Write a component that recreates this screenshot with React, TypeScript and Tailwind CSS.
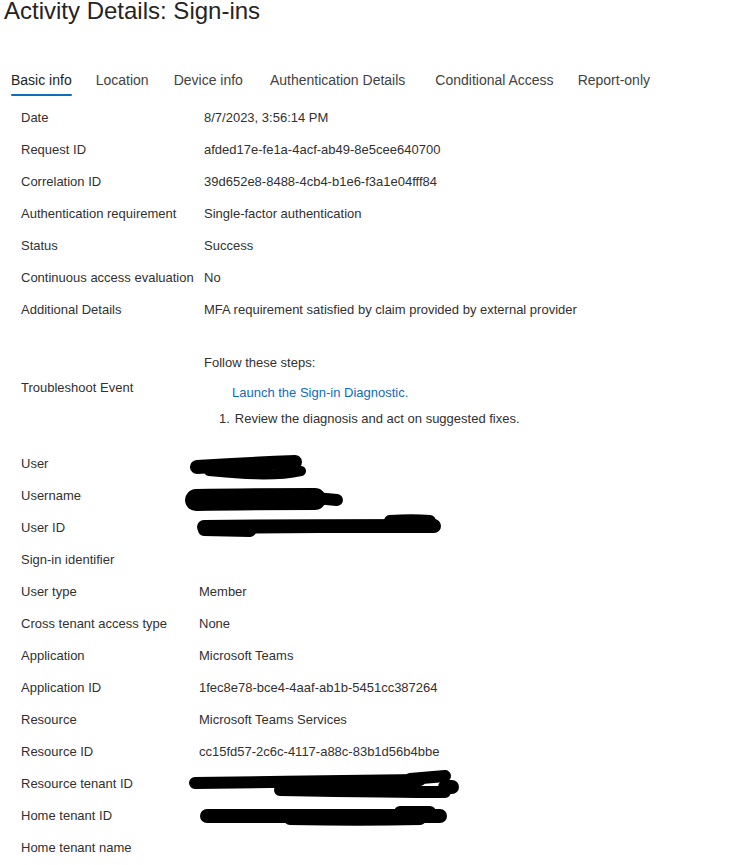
import React from 'react'

// tab labels with the spacing that the portal gives each one
const tabs: [string, string][] = [
  ['Basic info', ''],
  ['Location', 'ml-6'],
  ['Device info', 'ml-[25px]'],
  ['Authentication Details', 'ml-[27px]'],
  ['Conditional Access', 'ml-[30px]'],
  ['Report-only', 'ml-6'],
]

const topRows: [string, string][] = [
  ['Date', '8/7/2023, 3:56:14 PM'],
  ['Request ID', 'afded17e-fe1a-4acf-ab49-8e5cee640700'],
  ['Correlation ID', '39d652e8-8488-4cb4-b1e6-f3a1e04fff84'],
  ['Authentication requirement', 'Single-factor authentication'],
  ['Status', 'Success'],
  ['Continuous access evaluation', 'No'],
  ['Additional Details', 'MFA requirement satisfied by claim provided by external provider'],
]

// marker scribbles over the redacted values: [path, strokeWidth]
// svg sits 20px left/up of the value cell
const blots: Record<string, [string, number][]> = {
  user: [
    ['M18 33 C50 31 90 29 116 28', 14],
    ['M30 37 C60 40 95 43 122 37', 10],
  ],
  username: [
    ['M17 34 C60 33 100 33 136 33', 22],
    ['M136 32 L158 34', 12],
  ],
  userid: [
    ['M25 29 C100 28 180 28 255 28', 14],
    ['M25 32 L71 33', 12],
    ['M211 23 C225 22 240 22 251 23', 12],
  ],
  restenant: [
    ['M16 29 C90 28 170 27 241 26', 12],
    ['M101 36 C160 37 220 38 266 38', 12],
    ['M231 25 L266 22', 12],
    ['M266 33 L273 33', 14],
  ],
  hometenant: [
    ['M28 30 C100 30 180 30 261 30', 14],
    ['M111 33 C160 34 200 34 241 33', 12],
    ['M221 26 L251 26', 12],
  ],
}

function Redacted({ id }: { id: string }) {
  return (
    <svg className="absolute -left-5 -top-5" width="300" height="60" viewBox="0 0 300 60" fill="none">
      {blots[id].map(([d, w], i) => (
        <path key={i} d={d} stroke="#000" strokeWidth={w} strokeLinecap="round" strokeLinejoin="round" />
      ))}
    </svg>
  )
}

const bottomRows: [string, string | { redact: string } | null][] = [
  ['User', { redact: 'user' }],
  ['Username', { redact: 'username' }],
  ['User ID', { redact: 'userid' }],
  ['Sign-in identifier', null],
  ['User type', 'Member'],
  ['Cross tenant access type', 'None'],
  ['Application', 'Microsoft Teams'],
  ['Application ID', '1fec8e78-bce4-4aaf-ab1b-5451cc387264'],
  ['Resource', 'Microsoft Teams Services'],
  ['Resource ID', 'cc15fd57-2c6c-4117-a88c-83b1d56b4bbe'],
  ['Resource tenant ID', { redact: 'restenant' }],
  ['Home tenant ID', { redact: 'hometenant' }],
  ['Home tenant name', null],
]

export default function App() {
  return (
    <div className="min-h-screen bg-white text-[#323130] font-['Liberation_Sans',Arial,sans-serif] text-[13px] overflow-hidden">
      <h1 className="pl-1 -mt-[5px] text-[24px] leading-8 text-[#242424]">Activity Details: Sign-ins</h1>

      {/* Tabs */}
      <div className="mt-[43px] pl-[11px] flex text-[14px]">
        {tabs.map(([t, m], i) => (
          <div key={t} className={`flex flex-col ${m}`}>
            <span className={`leading-5 ${i === 0 ? 'text-[#242424]' : 'text-[#424242]'}`}>{t}</span>
            <span className={`mt-1 h-[2px] rounded-full ${i === 0 ? 'bg-[#0f6cbd]' : 'bg-transparent'}`} />
          </div>
        ))}
      </div>

      <div className="mt-[6px] pl-[21px]">
        {/* Basic rows */}
        {topRows.map(([k, v]) => (
          <div key={k} className="flex h-8 items-center">
            <div className="w-[183px] shrink-0">{k}</div>
            <div>{v}</div>
          </div>
        ))}

        {/* Troubleshoot */}
        <div className="flex items-center pt-[27px] pb-[19px]">
          <div className="w-[183px] shrink-0 pb-[6px]">Troubleshoot Event</div>
          <div className="leading-5">
            <div>Follow these steps:</div>
            <a href="#" className="block mt-[10px] pl-7 text-[#0f6cbd]">Launch the Sign-in Diagnostic.</a>
            <ol className="mt-[6px] pl-[15px]">
              <li className="flex gap-[5px]">
                <span>1.</span>
                <span>Review the diagnosis and act on suggested fixes.</span>
              </li>
            </ol>
          </div>
        </div>

        {/* Identity rows */}
        {bottomRows.map(([k, v]) => (
          <div key={k} className="flex h-8 items-center">
            <div className="w-[178px] shrink-0">{k}</div>
            <div className="relative h-5 leading-5">
              {typeof v === 'string' ? v : v ? <Redacted id={v.redact} /> : null}
            </div>
          </div>
        ))}
      </div>
    </div>
  )
}
